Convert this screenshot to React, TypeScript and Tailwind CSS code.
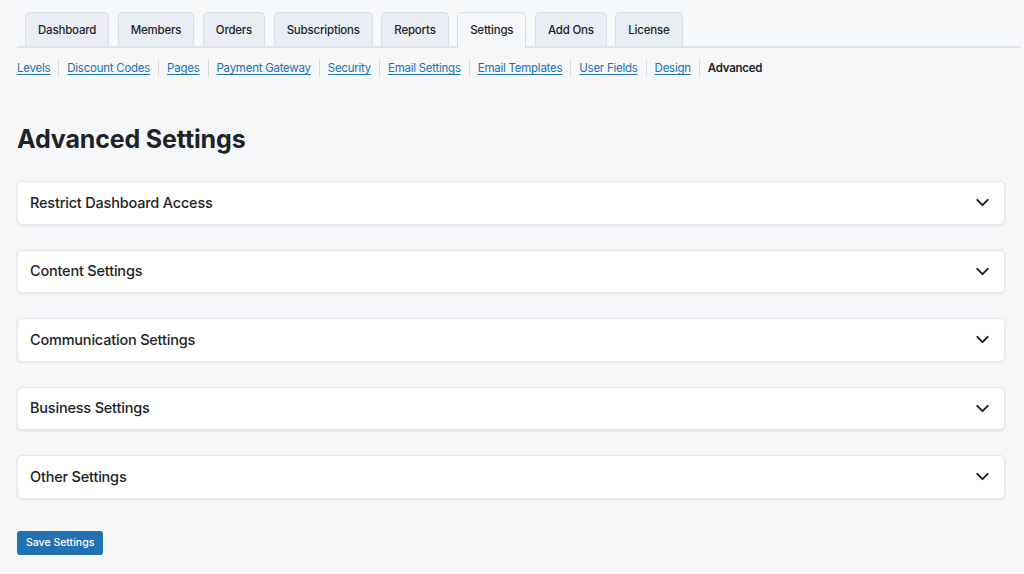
import { ChevronDown } from "lucide-react";

const tabs = [
  "Dashboard",
  "Members",
  "Orders",
  "Subscriptions",
  "Reports",
  "Settings",
  "Add Ons",
  "License",
];

const subLinks = [
  "Levels",
  "Discount Codes",
  "Pages",
  "Payment Gateway",
  "Security",
  "Email Settings",
  "Email Templates",
  "User Fields",
  "Design",
];

const sections = [
  "Restrict Dashboard Access",
  "Content Settings",
  "Communication Settings",
  "Business Settings",
  "Other Settings",
];

export default function App() {
  return (
    <div className="min-h-[574px] bg-[#f6f7f9] font-['Inter',sans-serif] text-[#1d2327] pl-[17px] pt-3">
      {/* Top tabs */}
      <nav className="flex gap-[8.5px] pl-2 w-[1004px] border-b-2 border-[#dfe4ea]">
        {tabs.map((tab) => {
          const active = tab === "Settings";
          return (
            <a
              key={tab}
              href="#"
              className={
                active
                  ? "-mb-[2px] h-[36px] flex items-center pt-[3px] pb-[2px] px-[12px] rounded-t-[5px] border border-b-0 border-[#d6dde6] bg-[#f6f7f9] text-[11.5px] tracking-[-0.2px] font-medium text-[#1d2327]"
                  : "h-[34px] flex items-center pt-[3px] px-[12px] rounded-t-[5px] border border-b-0 border-[#d6dde6] bg-[#e9eef5] text-[11.5px] tracking-[-0.2px] font-medium text-[#1d2327]"
              }
            >
              {tab}
            </a>
          );
        })}
      </nav>

      {/* Sub navigation */}
      <ul className="flex items-center mt-[12px] text-[11.5px] tracking-[-0.25px] leading-4">
        {subLinks.map((link) => (
          <li key={link} className="flex items-center">
            <a href="#" className="text-[#2271b1] underline underline-offset-2">
              {link}
            </a>
            <span className="mx-2 h-4 w-px bg-[#d5d9de]" />
          </li>
        ))}
        <li className="font-semibold text-[#1d2327]">Advanced</li>
      </ul>

      <h1 className="mt-[47px] text-[25px] leading-8 font-bold tracking-[-0.15px]">
        Advanced Settings
      </h1>

      {/* Sections */}
      <div className="mt-[26px] w-[988px] flex flex-col gap-[25px]">
        {sections.map((title) => (
          <div
            key={title}
            className="h-[43.5px] flex items-center justify-between pl-[12px] pr-[11px] bg-white border border-[#e4e7eb] rounded-[5px] shadow-[0_1px_3px_rgba(0,0,0,0.08)]"
          >
            <span className="text-[14.5px] tracking-[-0.2px] font-medium">{title}</span>
            <ChevronDown className="h-[21px] w-[21px] text-[#1d2327]" strokeWidth={2.25} />
          </div>
        ))}
      </div>

      <button
        type="button"
        className="mt-[32px] h-6 px-[9px] rounded-[3px] bg-[#2271b1] text-white text-[10.5px] font-medium"
      >
        Save Settings
      </button>
    </div>
  );
}
